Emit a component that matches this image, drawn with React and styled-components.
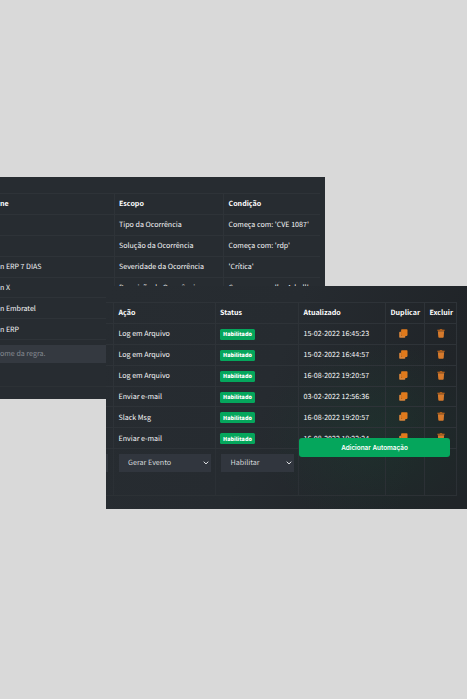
import styled, { createGlobalStyle, css } from 'styled-components';

const rules = [
  { name: '', scope: 'Tipo da Ocorrência', condition: "Começa com: 'CVE 1087'" },
  { name: '', scope: 'Solução da Ocorrência', condition: "Começa com: 'rdp'" },
  { name: 'n ERP 7 DIAS', scope: 'Severidade da Ocorrência', condition: "'Crítica'" },
  { name: 'n X', scope: 'Descrição da Ocorrência', condition: "Começa com: 'log4shell'" },
  { name: 'n Embratel', scope: '', condition: '' },
  { name: 'n ERP', scope: '', condition: '' },
];

const actions = [
  { action: 'Log em Arquivo', updated: '15-02-2022 16:45:23' },
  { action: 'Log em Arquivo', updated: '15-02-2022 16:44:57' },
  { action: 'Log em Arquivo', updated: '16-08-2022 19:20:57' },
  { action: 'Enviar e-mail', updated: '03-02-2022 12:56:36' },
  { action: 'Slack Msg', updated: '16-08-2022 19:20:57' },
  { action: 'Enviar e-mail', updated: '16-08-2022 19:22:24' },
];

const CopyIcon = () => (
  <svg width="9" height="9" viewBox="0 0 9 9">
    <path d="M1 2.8H2.2V6.8H6.3V7.9Q6.3 8.7 5.5 8.7H1Q.2 8.7.2 7.9V3.6Q.2 2.8 1 2.8Z" fill="#d9853b" />
    <rect x="2.1" y="0.3" width="6.4" height="6.6" rx="0.8" fill="#e07a1c" />
  </svg>
);

const TrashIcon = () => (
  <svg width="8" height="9" viewBox="0 0 8 9">
    <path d="M.4.7H2.6L3 .2H5L5.4.7H7.6V1.8H.4Z" fill="#d9701a" />
    <path d="M.9 2.2H7.1L6.7 7.9Q6.6 8.7 5.9 8.7H2.1Q1.4 8.7 1.3 7.9Z" fill="#d67a2c" />
  </svg>
);

const Chevron = () => (
  <svg width="6" height="4" viewBox="0 0 6 4">
    <path d="M.7.7 3 2.9 5.3.7" fill="none" stroke="#e4e6e8" strokeWidth="1" />
  </svg>
);

function App() {
  return (
    <Page>
      <GlobalStyle />
      <RulesPanel>
        <RulesRow>
          <Cell $head>ne</Cell>
          <Cell $head $pad={4}>Escopo</Cell>
          <Cell $head $pad={4.5}>Condição</Cell>
        </RulesRow>
        {rules.map(rule => (
          <RulesRow key={rule.scope + rule.name}>
            <NameCell>{rule.name}</NameCell>
            <Cell $pad={4}>{rule.scope}</Cell>
            <Cell $pad={4.5}>{rule.condition}</Cell>
          </RulesRow>
        ))}
        <RulesRow $form>
          <FormCell>
            <RuleInput>ome da regra.</RuleInput>
          </FormCell>
          <FormCell />
          <FormCell />
        </RulesRow>
      </RulesPanel>

      <ActionsPanel>
        <ActionsRow>
          <Cell />
          <Cell $head $pad={4.5}>Ação</Cell>
          <Cell $head $pad={4}>Status</Cell>
          <Cell $head $pad={4.5}>Atualizado</Cell>
          <Cell $head $pad={4.5}>Duplicar</Cell>
          <Cell $head $pad={4.5}>Excluir</Cell>
        </ActionsRow>
        {actions.map((item, index) => (
          <ActionsRow key={index}>
            <Cell />
            <Cell $pad={4.5}>{item.action}</Cell>
            <Cell $pad={4}>
              <Badge>Habilitado</Badge>
            </Cell>
            <Cell $pad={4.5}>{item.updated}</Cell>
            <IconCell $pad={12.5}>
              <CopyIcon />
            </IconCell>
            <IconCell $pad={12}>
              <TrashIcon />
            </IconCell>
          </ActionsRow>
        ))}
        <ActionsRow $form>
          <FormCell>
            <InputEdge />
          </FormCell>
          <FormCell $pad={4.5}>
            <Select $width={92}>
              Gerar Evento
              <Chevron />
            </Select>
          </FormCell>
          <FormCell $pad={5}>
            <Select $width={73}>
              Habilitar
              <Chevron />
            </Select>
          </FormCell>
          <FormCell />
          <FormCell />
          <FormCell />
        </ActionsRow>
        <AddButton type="button">Adicionar Automação</AddButton>
      </ActionsPanel>
    </Page>
  );
}

const GlobalStyle = createGlobalStyle`
  * {
    box-sizing: border-box;
  }
  body {
    margin: 0;
    background-color: #d9d9d9;
  }
`;

const Page = styled.main`
  width: 467px;
  height: 699px;
  padding-top: 177px;
  overflow: hidden;
  background-color: #d9d9d9;
  font-family: 'Noto Sans CJK JP', 'Noto Sans', sans-serif;
  font-size: 7.1px;
  text-rendering: geometricPrecision;
`;

const RulesPanel = styled.section`
  width: 325px;
  height: 222px;
  padding-top: 16px;
  background-color: #272c31;
`;

const ActionsPanel = styled.section`
  position: relative;
  width: 361px;
  height: 222.5px;
  margin: -113px 0 0 106px;
  padding-top: 16px;
  background:
    radial-gradient(ellipse 115px 95px at 272px 148px, rgba(24, 74, 53, 0.28), rgba(24, 74, 53, 0) 100%),
    linear-gradient(110deg, #272c31 0%, #262b30 45%, #202428 85%);
`;

const row = css`
  display: grid;
  height: ${({ $form }) => ($form ? '48px' : '20.9px')};
  border-top: 1px solid #2e3338;
  ${({ $form }) => $form && 'border-bottom: 1px solid #2c3135;'}
`;

const RulesRow = styled.div`
  ${row}
  width: 320px;
  grid-template-columns: 115px 109px 96px;
`;

const ActionsRow = styled.div`
  ${row}
  width: 351px;
  grid-template-columns: 8px 102px 83px 87px 39px 32px;
`;

const Cell = styled.div`
  display: flex;
  align-items: center;
  padding-top: 1px;
  padding-left: ${({ $pad }) => $pad ?? 0}px;
  border-right: 1px solid #2e3338;
  white-space: nowrap;
  line-height: 12px;
  color: ${({ $head }) => ($head ? '#ffffff' : '#f6f7f8')};
  font-weight: ${({ $head }) => ($head ? 700 : 400)};
  ${RulesRow} &:last-child {
    border-right: none;
  }
`;

const NameCell = styled(Cell)`
  letter-spacing: -0.02px;
`;

const IconCell = styled(Cell)`
  padding-top: 0;
  padding-bottom: 1px;
`;

const FormCell = styled.div`
  padding: 5px 0 0 ${({ $pad }) => $pad ?? 0}px;
  border-right: 1px solid #2b3035;
  ${RulesRow} &:last-child {
    border-right: none;
  }
`;

const RuleInput = styled.div`
  display: flex;
  align-items: center;
  width: 106px;
  height: 18px;
  background-color: #343940;
  color: #858a91;
`;

const InputEdge = styled.div`
  width: 2px;
  height: 18px;
  background-color: #32373e;
`;

const Select = styled.div`
  display: flex;
  align-items: center;
  justify-content: space-between;
  width: ${({ $width }) => $width}px;
  height: 18px;
  padding: 0 2px 0 9.5px;
  background-color: #31363e;
  color: #d3d6d9;
  font-size: 7.2px;
`;

const Badge = styled.span`
  display: flex;
  align-items: center;
  justify-content: center;
  width: 35px;
  height: 11px;
  border-radius: 1.5px;
  background-color: #05a65c;
  color: #ffffff;
  font-size: 5.4px;
  font-weight: 900;
`;

const AddButton = styled.button`
  position: absolute;
  top: 152px;
  left: 193px;
  width: 151px;
  height: 19px;
  padding: 0;
  border: none;
  border-radius: 3px;
  background-color: #05a65c;
  color: #ffffff;
  font-family: Inter, sans-serif;
  font-size: 6.4px;
  font-weight: 600;
  cursor: pointer;
`;

export default App;
